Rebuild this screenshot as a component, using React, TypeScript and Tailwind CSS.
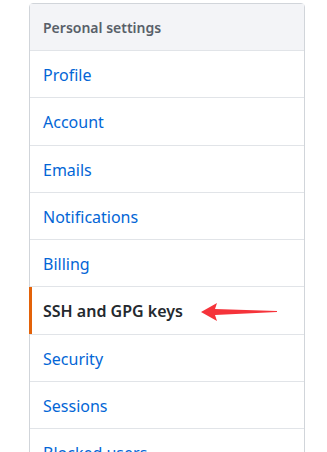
import React from "react";

const items = ["Profile", "Account", "Emails", "Notifications", "Billing", "SSH and GPG keys", "Security", "Sessions", "Blocked users"];

export default function App() {
  return (
    <div className="h-[452px] w-[327px] overflow-hidden bg-white pt-[3px] font-['Noto_Sans',sans-serif]">
      <nav className="ml-[29px] w-[276px] rounded-t-[4px] border border-[#d1d5da]">
        <div className="flex h-[47px] items-center border-b border-[#e1e4e8] bg-[#f3f4f7] px-[13px] pt-px text-[14px] font-semibold text-[#586069]">
          Personal settings
        </div>
        {items.map((item) => {
          const active = item === "SSH and GPG keys";
          return (
            <div
              key={item}
              className={
                active
                  ? "relative flex h-[47.25px] items-center border-b border-[#e1e4e8] px-[13px] pt-[2px] text-[16px] font-semibold text-[#24292e]"
                  : "flex h-[47.25px] items-center border-b border-[#e1e4e8] px-[13px] pt-[2px] text-[16px] text-[#0366d6]"
              }
            >
              {active && <span className="absolute -left-px top-0 h-full w-[3px] bg-[#e36209]" />}
              {item}
              {active && (
                <svg className="absolute left-[170px] top-[15px]" width="78" height="20" viewBox="0 0 78 20">
                  <path d="M1 10 L17 1 L15 7 L77 9 L77 10 L15 13 L17 19 Z" fill="#f5333a" />
                </svg>
              )}
            </div>
          );
        })}
      </nav>
    </div>
  );
}
